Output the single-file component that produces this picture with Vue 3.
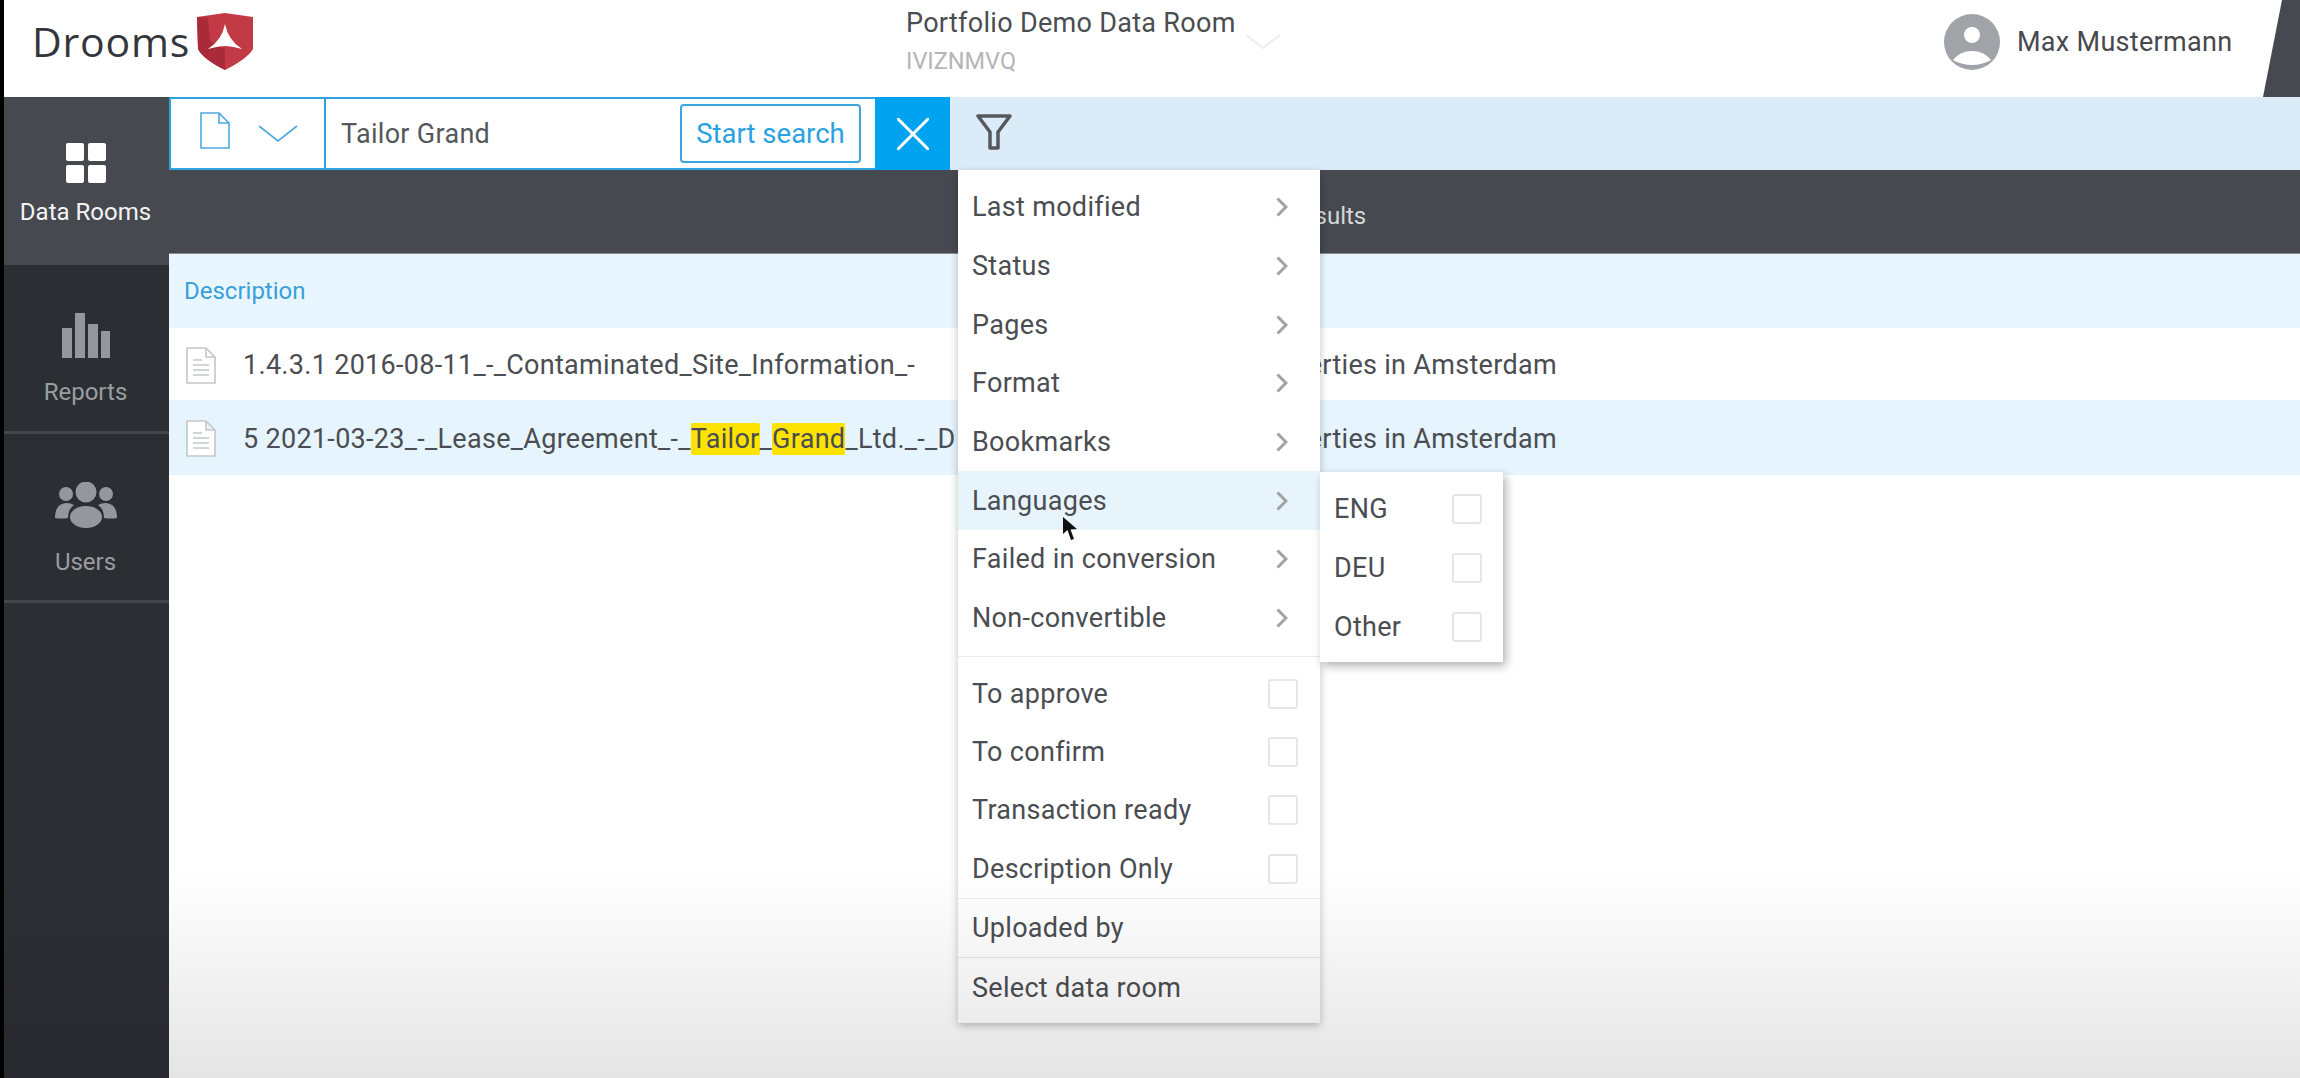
<script setup>
const menuA = ['Last modified', 'Status', 'Pages', 'Format', 'Bookmarks', 'Languages', 'Failed in conversion', 'Non-convertible']
const menuB = ['To approve', 'To confirm', 'Transaction ready', 'Description Only']
const langs = ['ENG', 'DEU', 'Other']
</script>

<template>
  <div class="page">
    <header class="top">
      <div class="brand">
        <span class="wordmark">Drooms</span>
        <svg class="shield" viewBox="0 0 56 58">
          <path d="M0 4 L28 0 L56 4 L56 36 Q50 46 28 57 Q6 46 1 36 Z" fill="#c13a45" />
          <path d="M0 4 L11 5 L13 28 L28 36 L28 57 Q6 46 1 36 Z" fill="#a92a38" />
          <path d="M28 11 Q31 27 45 36 Q34 33 28 33 Q22 33 11 36 Q25 27 28 11 Z" fill="#fff" />
        </svg>
      </div>
      <div class="room">
        <div class="room-name">Portfolio Demo Data Room</div>
        <div class="room-code">IVIZNMVQ</div>
      </div>
      <svg class="room-chev" viewBox="0 0 36 16"><path d="M1 1 L18 14 L35 1" /></svg>
      <div class="user">
        <svg class="avatar" viewBox="0 0 56 56">
          <circle cx="28" cy="28" r="28" fill="#a0a3a8" />
          <circle cx="28" cy="21" r="8" fill="#fff" />
          <path d="M9 46 Q16 37 28 37 Q40 37 47 46 Q38 51 28 51 Q18 51 9 46 Z" fill="#fff" />
        </svg>
        <span class="user-name">Max Mustermann</span>
      </div>
      <div class="wedge"></div>
    </header>

    <div class="body">
      <nav class="side">
        <div class="side-item active">
          <svg class="ico-grid" viewBox="0 0 40 40" fill="#fff">
            <rect width="18" height="18" rx="2" />
            <rect x="22" width="18" height="18" rx="2" />
            <rect y="22" width="18" height="18" rx="2" />
            <rect x="22" y="22" width="18" height="18" rx="2" />
          </svg>
          <span>Data Rooms</span>
        </div>
        <div class="side-item">
          <svg class="ico-bars" viewBox="0 0 48 45" fill="#94979c">
            <rect y="15" width="10" height="30" />
            <rect x="13" width="10" height="45" />
            <rect x="26" y="11" width="10" height="34" />
            <rect x="39" y="18" width="9" height="27" />
          </svg>
          <span>Reports</span>
        </div>
        <div class="side-item">
          <svg class="ico-users" viewBox="0 0 62 46" fill="#94979c">
            <circle cx="31" cy="10" r="10.5" />
            <circle cx="11" cy="12" r="7" />
            <circle cx="51" cy="12" r="7" />
            <ellipse cx="31" cy="35" rx="16" ry="11" />
            <path d="M0 36 Q0 22 11 21 Q16 21 19 23 Q13 27 13 36 Q6 37 0 36 Z" />
            <path d="M62 36 Q62 22 51 21 Q46 21 43 23 Q49 27 49 36 Q56 37 62 36 Z" />
          </svg>
          <span>Users</span>
        </div>
      </nav>

      <main class="main">
        <div class="toolbar">
          <div class="search">
            <div class="type-pick">
              <svg class="ico-doc" viewBox="0 0 30 37">
                <path d="M1 1 H19 L29 11 V36 H1 Z M19 1 V11 H29" />
              </svg>
              <svg class="ico-chev" viewBox="0 0 40 18"><path d="M1 1 L20 16 L39 1" /></svg>
            </div>
            <div class="field">
              <span class="query">Tailor Grand</span>
              <button class="start">Start search</button>
            </div>
          </div>
          <button class="close">
            <svg viewBox="0 0 32 32"><path d="M1 1 L31 31 M31 1 L1 31" /></svg>
          </button>
          <svg class="ico-filter" viewBox="0 0 36 36">
            <path d="M2 2 H34 L22 18 V34 H14 V18 Z" />
          </svg>
        </div>

        <div class="subbar"><span class="results">Results</span></div>

        <div class="thead">Description</div>
        <div class="row">
          <svg class="ico-file" viewBox="0 0 30 37">
            <path class="outline" d="M1 1 H20 L29 10 V36 H1 Z M20 1 V10 H29" />
            <path class="lines" d="M7 13 H16 M7 18 H23 M7 23 H23 M7 28 H23" />
          </svg>
          <span class="name">1.4.3.1 2016-08-11_-_Contaminated_Site_Information_-</span>
          <span class="desc">Properties in Amsterdam</span>
        </div>
        <div class="row alt">
          <svg class="ico-file" viewBox="0 0 30 37">
            <path class="outline" d="M1 1 H20 L29 10 V36 H1 Z M20 1 V10 H29" />
            <path class="lines" d="M7 13 H16 M7 18 H23 M7 23 H23 M7 28 H23" />
          </svg>
          <div class="name"><span>5 2021-03-23_-_Lease_Agreement_-_</span><mark>Tailor</mark><span>_</span><mark>Grand</mark><span>_Ltd._-_D</span></div>
          <span class="desc">Properties in Amsterdam</span>
        </div>
      </main>
    </div>

    <div class="menu">
      <div class="group-a">
        <div v-for="m in menuA" :key="m" class="mi" :class="{ hover: m === 'Languages' }">
          <span>{{ m }}</span>
          <svg class="gt" viewBox="0 0 12 20"><path d="M1.5 1.5 L10 10 L1.5 18.5" /></svg>
        </div>
      </div>
      <div class="group-b">
        <div v-for="m in menuB" :key="m" class="mi short">
          <span>{{ m }}</span>
          <i class="check"></i>
        </div>
      </div>
      <div class="mi foot">Uploaded by</div>
      <div class="mi foot">Select data room</div>
    </div>

    <div class="submenu">
      <div v-for="l in langs" :key="l" class="si">
        <span>{{ l }}</span>
        <i class="check"></i>
      </div>
    </div>

    <svg class="cursor" viewBox="0 0 16 24">
      <path d="M0 0 L0 17 L4.5 13 L8 23 L11 22 L7.5 12.5 L14 12 Z" fill="#111" />
    </svg>

    <div class="fade"></div>
  </div>
</template>

<style>
html, body { margin: 0; padding: 0; background: #fff; }
</style>

<style scoped>
.page {
  position: relative;
  width: 2300px;
  height: 1078px;
  overflow: hidden;
  background: #fff;
  display: flex;
  flex-direction: column;
  font-family: Roboto, "Liberation Sans", sans-serif;
  color: #4a4d52;
  border-left: 4px solid #000;
  box-sizing: border-box;
}
.top {
  position: relative;
  height: 97px;
  flex: none;
  display: flex;
  align-items: center;
  background: #fff;
  padding-bottom: 14px;
  box-sizing: border-box;
}
.brand { width: 902px; display: flex; align-items: center; padding-left: 28px; box-sizing: border-box; }
.wordmark { width: 165px; font-family: "Open Sans", sans-serif; font-size: 41px; color: #33363b; letter-spacing: .8px; margin-top: -2px; }
.shield { width: 56px; height: 58px; }
.room { width: 339px; margin-bottom: 3px; }
.room-name { font-size: 27px; letter-spacing: .3px; line-height: 38px; color: #4a4d52; }
.room-code { font-size: 23.5px; line-height: 30px; margin-top: 4px; color: #b3b5b8; }
.room-chev { width: 36px; height: 16px; fill: none; stroke: #eeeeef; stroke-width: 2; }
.user { margin-left: 663px; display: flex; align-items: center; gap: 17px; }
.avatar { width: 56px; height: 56px; }
.user-name { font-size: 27px; letter-spacing: .3px; color: #47494e; }
.wedge {
  position: absolute;
  right: 0;
  top: 0;
  width: 37px;
  height: 97px;
  background: #46494f;
  clip-path: polygon(19px 0, 37px 0, 37px 97px, 0 97px);
}
.body { flex: 1; display: flex; min-height: 0; }
.side { width: 165px; flex: none; background: #2b2e33; display: flex; flex-direction: column; }
.side-item {
  height: 169px;
  box-sizing: border-box;
  border-bottom: 3px solid #43464b;
  display: flex;
  flex-direction: column;
  align-items: center;
  padding: 48px 2px 0 0;
  gap: 20px;
  color: #9a9da1;
  font-size: 24px;
  line-height: 28px;
}
.side-item.active { height: 168px; background: #46494f; color: #f4f4f5; border-bottom: 0; padding-top: 46px; gap: 15px; }
.ico-grid { width: 40px; height: 40px; }
.ico-bars { width: 48px; height: 45px; }
.ico-users { width: 62px; height: 46px; }
.main { flex: 1; display: flex; flex-direction: column; min-width: 0; }
.toolbar { height: 73px; background: #dcebf8; display: flex; align-items: stretch; flex: none; }
.search { width: 706px; display: flex; border: 2px solid #2fa3dc; border-right: 0; box-sizing: border-box; background: #fff; }
.type-pick { width: 155px; border-right: 2px solid #2fa3dc; box-sizing: border-box; display: flex; align-items: center; padding-left: 29px; gap: 28px; }
.ico-doc { width: 30px; height: 37px; fill: none; stroke: #4da9dc; stroke-width: 1.6; margin-top: -6px; }
.ico-chev { width: 40px; height: 18px; fill: none; stroke: #4da9dc; stroke-width: 1.6; }
.field { flex: 1; display: flex; align-items: center; justify-content: space-between; padding-left: 15px; padding-right: 14px; }
.query { font-size: 27px; letter-spacing: .3px; color: #54575b; }
.start {
  width: 181px;
  height: 59px;
  border: 2px solid #3ba6de;
  border-radius: 4px;
  background: #fff;
  color: #29a2e2;
  font: 400 27.5px Roboto, sans-serif;
  padding: 0;
}
.close { width: 75px; border: 0; padding: 0; background: #00a3f0; display: flex; align-items: center; justify-content: center; }
.close svg { width: 32px; height: 32px; fill: none; stroke: #fff; stroke-width: 3; stroke-linecap: round; }
.ico-filter { width: 36px; height: 36px; margin: 17px 0 0 26px; fill: none; stroke: #55585d; stroke-width: 3.5; stroke-linejoin: round; }
.subbar { height: 84px; background: #46494f; flex: none; display: flex; align-items: center; padding-left: 1118px; box-sizing: border-box; border-bottom: 1px solid #8a8c90; }
.results { color: #d6d7d9; font-size: 24px; line-height: 1; padding-top: 8px; }
.thead { height: 74px; background: #e8f6ff; color: #3a9fd8; font-size: 24px; display: flex; align-items: center; padding-left: 15px; flex: none; }
.row { height: 72px; display: flex; align-items: center; padding: 2px 0 0 17px; box-sizing: border-box; flex: none; font-size: 27px; letter-spacing: .3px; color: #4a4d52; }
.row.alt { background: #e6f4fd; height: 75px; }
.ico-file { width: 30px; height: 37px; flex: none; fill: #fff; margin-right: 27px; }
.outline { stroke: #c4c6c8; stroke-width: 1.6; }
.lines { stroke: #c4c6c8; stroke-width: 1.6; fill: none; }
.name { width: 900px; flex: none; overflow: hidden; white-space: nowrap; }
mark { background: #ffe300; color: inherit; border-radius: 2px; }
.desc { margin-left: 107px; white-space: nowrap; }
.menu {
  position: absolute;
  left: 954px;
  top: 170px;
  width: 362px;
  height: 853px;
  background: #fff;
  box-shadow: 0 3px 8px rgba(0, 0, 0, .25);
  font-size: 27px;
  letter-spacing: .3px;
  color: #4a4d52;
}
.group-a { padding-top: 8px; height: 487px; box-sizing: border-box; border-bottom: 1px solid #ececec; }
.mi { height: 58.7px; display: flex; align-items: center; justify-content: space-between; padding: 0 32px 0 14px; box-sizing: border-box; }
.mi.hover { background: #e8f4fc; }
.gt { width: 12px; height: 20px; fill: none; stroke: #a0a2a5; stroke-width: 3; }
.group-b { padding-top: 8px; height: 242px; box-sizing: border-box; border-bottom: 1px solid #ececec; }
.mi.short { height: 58.2px; padding-right: 22px; }
.check { width: 30px; height: 30px; box-sizing: border-box; border: 2px solid #e6e6e6; border-radius: 3px; background: #fff; display: block; flex: none; }
.mi.foot { height: 58px; }
.mi.foot + .mi.foot { border-top: 1px solid #e6e6e6; height: 66px; padding-bottom: 6px; }
.submenu {
  position: absolute;
  left: 1316px;
  top: 472px;
  width: 183px;
  height: 190px;
  background: #fff;
  box-shadow: 3px 4px 9px rgba(0, 0, 0, .3);
  font-size: 27px;
  letter-spacing: .3px;
  padding-top: 8px;
  box-sizing: border-box;
}
.si { height: 58.7px; display: flex; align-items: center; justify-content: space-between; padding: 0 21px 0 14px; }
.cursor { position: absolute; left: 1059px; top: 517px; width: 16px; height: 24px; }
.fade {
  position: absolute;
  left: 0;
  right: 0;
  top: 870px;
  bottom: 0;
  background: linear-gradient(rgba(0, 0, 0, 0), rgba(0, 0, 0, .1));
  pointer-events: none;
}
</style>
